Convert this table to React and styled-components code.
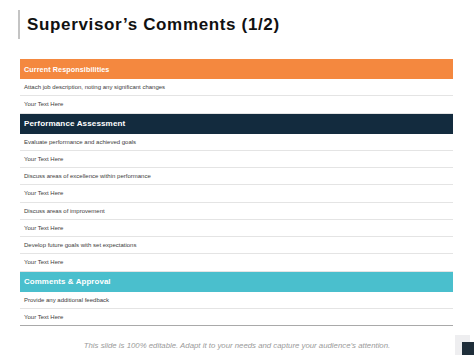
import React from 'react';
import styled, { createGlobalStyle } from 'styled-components';

const GlobalStyle = createGlobalStyle`
  html, body {
    margin: 0;
    padding: 0;
    background: #ffffff;
  }
  body {
    font-family: "Liberation Sans", Arial, sans-serif;
  }
`;

const Slide = styled.div`
  position: relative;
  width: 474px;
  height: 355px;
  overflow: hidden;
  background: #ffffff;
  display: flex;
  flex-direction: column;
`;

const TitleBar = styled.div`
  margin: 10px 0 0 18px;
  height: 29px;
  border-left: 2px solid #c4c4c4;
  padding-left: 7px;
  display: flex;
  align-items: center;
`;

const Title = styled.h1`
  margin: 0;
  font-family: "Liberation Sans", Arial, sans-serif;
  font-weight: bold;
  font-size: 17px;
  color: #111;
  letter-spacing: 0.65px;
`;

const Table = styled.div`
  margin: 20px 21px 0 20px;
  display: flex;
  flex-direction: column;
`;

const SectionHeader = styled.div`
  height: 20px;
  background: ${(p) => p.bg};
  color: #ffffff;
  font-weight: bold;
  font-size: ${(p) => p.size || 8}px;
  display: flex;
  align-items: center;
  padding-left: 4px;
  letter-spacing: 0.1px;
`;

const Row = styled.div`
  height: 16.25px;
  border-bottom: ${(p) => (p.last ? '1.5px solid #a9a9a9' : '1px solid #e4e4e4')};
  display: flex;
  align-items: center;
  padding-left: 4px;
  font-size: 6px;
  color: #3c3c3c;
`;

const Footer = styled.div`
  margin-top: 15px;
  text-align: center;
  font-style: italic;
  font-size: 7.8px;
  color: #9a9a9a;
`;

const CornerTab = styled.div`
  position: absolute;
  right: 4px;
  bottom: 0;
  width: 15px;
  height: 20px;
  background: #eeeef0;
`;

const CornerMark = styled.div`
  position: absolute;
  right: 0;
  bottom: 0;
  width: 12px;
  height: 13px;
  background: #1f2e3a;
`;

const sections = [
  {
    title: 'Current Responsibilities',
    bg: '#f4883f',
    size: 7.2,
    rows: ['Attach job description, noting any significant changes', 'Your Text Here'],
  },
  {
    title: 'Performance Assessment',
    bg: '#132b3e',
    size: 8.1,
    rows: [
      'Evaluate performance and achieved goals',
      'Your Text Here',
      'Discuss areas of excellence within performance',
      'Your Text Here',
      'Discuss areas of improvement',
      'Your Text Here',
      'Develop future goals with set expectations',
      'Your Text Here',
    ],
  },
  {
    title: 'Comments & Approval',
    bg: '#4abfcd',
    size: 7.9,
    rows: ['Provide any additional feedback', 'Your Text Here'],
  },
];

const App = () => {
  return (
    <>
      <GlobalStyle />
      <Slide>
        <TitleBar>
          <Title>Supervisor’s Comments (1/2)</Title>
        </TitleBar>
        <Table>
          {sections.map((s, si) => (
            <React.Fragment key={s.title}>
              <SectionHeader bg={s.bg} size={s.size}>{s.title}</SectionHeader>
              {s.rows.map((r, ri) => (
                <Row key={ri} last={si === sections.length - 1 && ri === s.rows.length - 1}>
                  {r}
                </Row>
              ))}
            </React.Fragment>
          ))}
        </Table>
        <Footer>This slide is 100% editable. Adapt it to your needs and capture your audience’s attention.</Footer>
        <CornerTab />
        <CornerMark />
      </Slide>
    </>
  );
};

export default App;
